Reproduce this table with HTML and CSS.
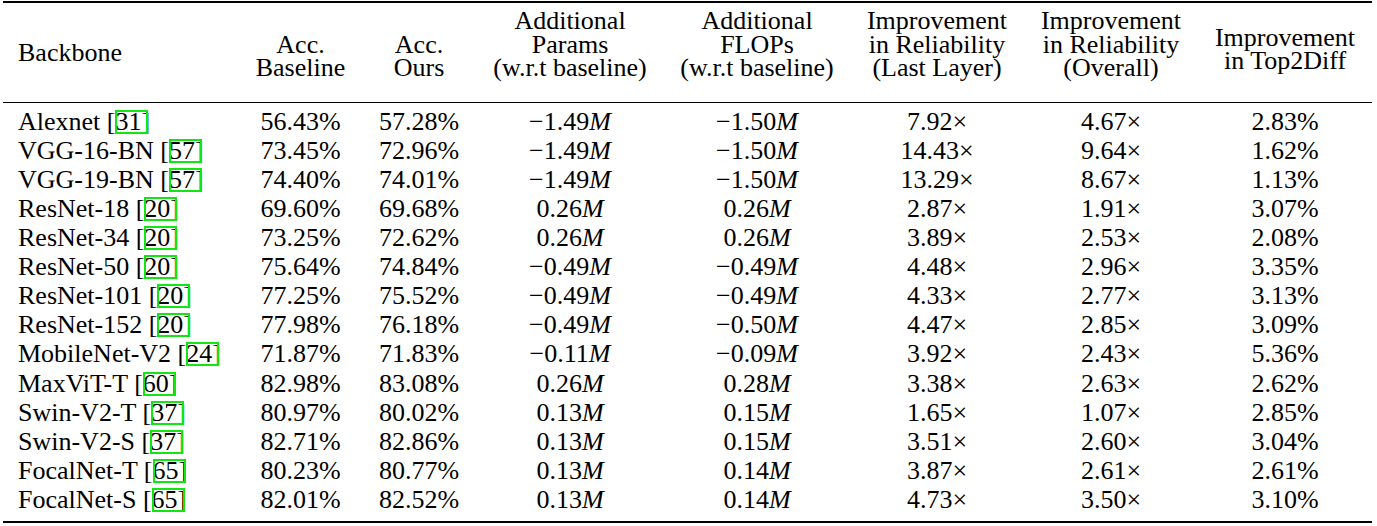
FILE: index.html
```html
<!DOCTYPE html>
<html>
<head>
<meta charset="utf-8">
<link rel="stylesheet" href="styles.css">
</head>
<body>
<div class="wrap">
<table class="results">
  <colgroup>
    <col class="c1"><col class="c2"><col class="c3"><col class="c4"><col class="c5"><col class="c6"><col class="c7"><col class="c8">
  </colgroup>
  <thead>
    <tr>
      <th class="first bb"><div>Backbone</div></th>
      <th class="two"><div>Acc.</div><div>Baseline</div></th>
      <th class="two"><div>Acc.</div><div>Ours</div></th>
      <th><div>Additional</div><div>Params</div><div>(w.r.t baseline)</div></th>
      <th><div>Additional</div><div>FLOPs</div><div>(w.r.t baseline)</div></th>
      <th><div>Improvement</div><div>in Reliability</div><div>(Last Layer)</div></th>
      <th><div>Improvement</div><div>in Reliability</div><div>(Overall)</div></th>
      <th class="two t2d"><div>Improvement</div><div>in Top2Diff</div></th>
    </tr>
  </thead>
  <tbody>
    <tr><td class="first">Alexnet [<span class="cite">31</span>]</td><td>56.43%</td><td>57.28%</td><td>−1.49<i>M</i></td><td>−1.50<i>M</i></td><td>7.92×</td><td>4.67×</td><td>2.83%</td></tr>
    <tr><td class="first">VGG-16-BN [<span class="cite">57</span>]</td><td>73.45%</td><td>72.96%</td><td>−1.49<i>M</i></td><td>−1.50<i>M</i></td><td>14.43×</td><td>9.64×</td><td>1.62%</td></tr>
    <tr><td class="first">VGG-19-BN [<span class="cite">57</span>]</td><td>74.40%</td><td>74.01%</td><td>−1.49<i>M</i></td><td>−1.50<i>M</i></td><td>13.29×</td><td>8.67×</td><td>1.13%</td></tr>
    <tr><td class="first">ResNet-18 [<span class="cite">20</span>]</td><td>69.60%</td><td>69.68%</td><td>0.26<i>M</i></td><td>0.26<i>M</i></td><td>2.87×</td><td>1.91×</td><td>3.07%</td></tr>
    <tr><td class="first">ResNet-34 [<span class="cite">20</span>]</td><td>73.25%</td><td>72.62%</td><td>0.26<i>M</i></td><td>0.26<i>M</i></td><td>3.89×</td><td>2.53×</td><td>2.08%</td></tr>
    <tr><td class="first">ResNet-50 [<span class="cite">20</span>]</td><td>75.64%</td><td>74.84%</td><td>−0.49<i>M</i></td><td>−0.49<i>M</i></td><td>4.48×</td><td>2.96×</td><td>3.35%</td></tr>
    <tr><td class="first">ResNet-101 [<span class="cite">20</span>]</td><td>77.25%</td><td>75.52%</td><td>−0.49<i>M</i></td><td>−0.49<i>M</i></td><td>4.33×</td><td>2.77×</td><td>3.13%</td></tr>
    <tr><td class="first">ResNet-152 [<span class="cite">20</span>]</td><td>77.98%</td><td>76.18%</td><td>−0.49<i>M</i></td><td>−0.50<i>M</i></td><td>4.47×</td><td>2.85×</td><td>3.09%</td></tr>
    <tr><td class="first">MobileNet-V2 [<span class="cite">24</span>]</td><td>71.87%</td><td>71.83%</td><td>−0.11<i>M</i></td><td>−0.09<i>M</i></td><td>3.92×</td><td>2.43×</td><td>5.36%</td></tr>
    <tr><td class="first">MaxViT-T [<span class="cite">60</span>]</td><td>82.98%</td><td>83.08%</td><td>0.26<i>M</i></td><td>0.28<i>M</i></td><td>3.38×</td><td>2.63×</td><td>2.62%</td></tr>
    <tr><td class="first">Swin-V2-T [<span class="cite">37</span>]</td><td>80.97%</td><td>80.02%</td><td>0.13<i>M</i></td><td>0.15<i>M</i></td><td>1.65×</td><td>1.07×</td><td>2.85%</td></tr>
    <tr><td class="first">Swin-V2-S [<span class="cite">37</span>]</td><td>82.71%</td><td>82.86%</td><td>0.13<i>M</i></td><td>0.15<i>M</i></td><td>3.51×</td><td>2.60×</td><td>3.04%</td></tr>
    <tr><td class="first">FocalNet-T [<span class="cite">65</span>]</td><td>80.23%</td><td>80.77%</td><td>0.13<i>M</i></td><td>0.14<i>M</i></td><td>3.87×</td><td>2.61×</td><td>2.61%</td></tr>
    <tr><td class="first">FocalNet-S [<span class="cite">65</span>]</td><td>82.01%</td><td>82.52%</td><td>0.13<i>M</i></td><td>0.14<i>M</i></td><td>4.73×</td><td>3.50×</td><td>3.10%</td></tr>
  </tbody>
</table>
</div>
</body>
</html>
```

FILE: styles.css
```css
html, body {
  margin: 0;
  padding: 0;
  background: #ffffff;
}

.wrap {
  padding: 1px 0 0 3px;
}

.results {
  border-collapse: separate;
  border-spacing: 0;
  table-layout: fixed;
  width: 1369px;
  font-family: "Liberation Serif", "Times New Roman", "DejaVu Serif", serif;
  font-size: 26px;
  color: #000;
}

.c1 { width: 236px; }
.c2 { width: 123px; }
.c3 { width: 114px; }
.c4 { width: 188px; }
.c5 { width: 186px; }
.c6 { width: 174px; }
.c7 { width: 174px; }
.c8 { width: 174px; }

.results th {
  font-weight: normal;
  text-align: center;
  vertical-align: top;
  line-height: 23.5px;
  padding: 6px 0 22.5px 0;
  border-top: 2px solid #000;
  border-bottom: 1px solid #000;
  white-space: nowrap;
}

.results th.two {
  padding-top: 29.5px;
}

.results th.t2d {
  padding-top: 22.5px;
}

.results th.bb {
  padding-top: 38px;
}

.results td {
  text-align: center;
  line-height: 29.1px;
  padding: 0;
  white-space: nowrap;
}

.results .first {
  text-align: left;
  padding-left: 15px;
}

.results tbody tr:first-child td {
  padding-top: 3.7px;
}

.results tbody tr:last-child td {
  padding-bottom: 7px;
  border-bottom: 2px solid #000;
}

.results i {
  font-style: italic;
}

.cite {
  position: relative;
}

.cite::after {
  content: "";
  position: absolute;
  left: 0;
  right: -7px;
  top: 3px;
  bottom: 2px;
  border: 2px solid #12e612;
}
```
